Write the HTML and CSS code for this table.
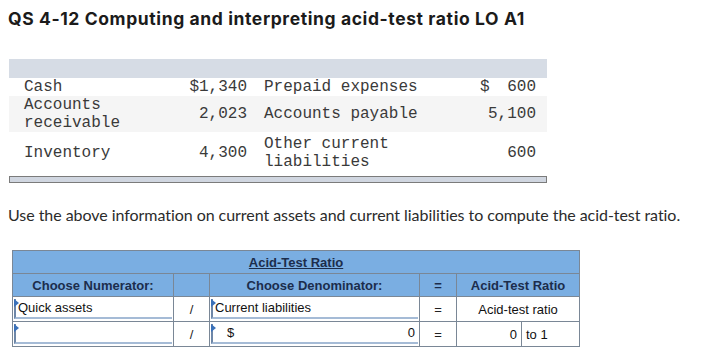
FILE: index.html
```html
<!DOCTYPE html>
<html>
<head>
<meta charset="utf-8">
<link rel="stylesheet" href="styles.css">
</head>
<body>
<h1 class="title">QS 4-12 Computing and interpreting acid-test ratio LO A1</h1>

<div class="data">
  <div class="data-head"></div>
  <div class="data-row">
    <div class="c-label">Cash</div>
    <div class="c-amt">$1,340</div>
    <div class="c-label2">Prepaid expenses</div>
    <div class="c-money"><span>$</span><span>600</span></div>
  </div>
  <div class="data-row alt">
    <div class="c-label">Accounts<br>receivable</div>
    <div class="c-amt">2,023</div>
    <div class="c-label2">Accounts payable</div>
    <div class="c-money"><span></span><span>5,100</span></div>
  </div>
  <div class="data-row tall">
    <div class="c-label">Inventory</div>
    <div class="c-amt">4,300</div>
    <div class="c-label2">Other current<br>liabilities</div>
    <div class="c-money"><span></span><span>600</span></div>
  </div>
  <div class="data-foot"></div>
</div>

<p class="instr">Use the above information on current assets and current liabilities to compute the acid-test ratio.</p>

<table class="ratio">
  <colgroup>
    <col class="w1"><col class="w2"><col class="w3"><col class="w4"><col class="w5"><col class="w6">
  </colgroup>
  <tr class="hdr">
    <th colspan="6"><span class="u">Acid-Test Ratio</span></th>
  </tr>
  <tr class="hdr">
    <th>Choose Numerator:</th>
    <th></th>
    <th>Choose Denominator:</th>
    <th>=</th>
    <th colspan="2">Acid-Test Ratio</th>
  </tr>
  <tr>
    <td class="inp"><div class="box">Quick assets</div></td>
    <td class="op">/</td>
    <td class="inp"><div class="box">Current liabilities</div></td>
    <td class="op">=</td>
    <td colspan="2" class="ctr">Acid-test ratio</td>
  </tr>
  <tr>
    <td class="inp"><div class="box"></div></td>
    <td class="op">/</td>
    <td class="inp"><div class="box money"><span class="sym">$</span><span class="num">0</span></div></td>
    <td class="op">=</td>
    <td class="rgt">0</td>
    <td class="to">to 1</td>
  </tr>
</table>
</body>
</html>
```

FILE: styles.css
```css
body {
  margin: 8px;
  background: #fff;
  font-family: "Liberation Sans", Arial, sans-serif;
}

.title {
  margin: 0;
  font-family: Inter, Lato, sans-serif;
  font-weight: 700;
  font-size: 17.5px;
  line-height: 22px;
  letter-spacing: 0.6px;
  color: #1b1b1b;
}

.data {
  margin: 29px 0 0 1px;
  width: 538px;
  font-family: "Liberation Mono", "Courier New", monospace;
  font-size: 16px;
  line-height: 18px;
  color: #3a3a3a;
}

.data-head {
  height: 19px;
  background: #d6dce5;
}

.data-row {
  display: grid;
  grid-template-columns: 170px 68px 233px 67px;
  align-items: center;
  height: 18px;
  background: #fff;
}

.data-row.alt {
  height: 36px;
  background: #f5f5f5;
}

.data-row.tall {
  height: 41px;
}

.c-label {
  padding-left: 15px;
}

.c-amt {
  text-align: right;
}

.c-label2 {
  padding-left: 17px;
}

.c-money {
  display: flex;
  justify-content: space-between;
  padding-right: 11px;
}

.data-foot {
  margin-top: 3px;
  height: 5px;
  background: #d0d6e0;
  border: 1px solid #7b7b7b;
}

.instr {
  margin: 22px 0 0 0;
  font-family: Lato, "Open Sans", sans-serif;
  font-size: 16px;
  line-height: 20px;
  letter-spacing: -0.05px;
  color: #2b2b2b;
}

.ratio {
  margin: 25px 0 0 4px;
  border-collapse: collapse;
  table-layout: fixed;
  width: 567px;
  font-family: "Liberation Sans", Arial, sans-serif;
  font-size: 13px;
  color: #111;
}

.w1 { width: 161px; }
.w2 { width: 36px; }
.w3 { width: 210px; }
.w4 { width: 37px; }
.w5 { width: 65px; }
.w6 { width: 58px; }

.ratio th,
.ratio td {
  border: 1px solid #7a8796;
  height: 22px;
  padding: 0;
  text-align: center;
  vertical-align: middle;
}

.ratio th {
  background: #7aaee2;
  color: #1c2d4c;
  font-weight: 700;
  font-size: 13px;
}

.ratio .u {
  text-decoration: underline;
}

.ratio td.op {
  color: #222;
}

.ratio td.inp {
  padding: 1px;
  text-align: left;
}

.box {
  position: relative;
  height: 18px;
  line-height: 18px;
  background: #fff;
  border-left: 2px solid #6e87a8;
  border-bottom: 2px solid #a5bbd6;
  padding-left: 2px;
  color: #111;
}

.box::before {
  content: "";
  position: absolute;
  left: -2px;
  top: 0;
  border-top: 4px solid transparent;
  border-bottom: 4px solid transparent;
  border-left: 5px solid #3a70b8;
}

.box.money {
  display: flex;
  justify-content: space-between;
  padding-left: 14px;
  padding-right: 3px;
}

.ratio td.rgt {
  text-align: right;
  padding-right: 4px;
}

.ratio td.to {
  text-align: left;
  padding-left: 4px;
}
```
